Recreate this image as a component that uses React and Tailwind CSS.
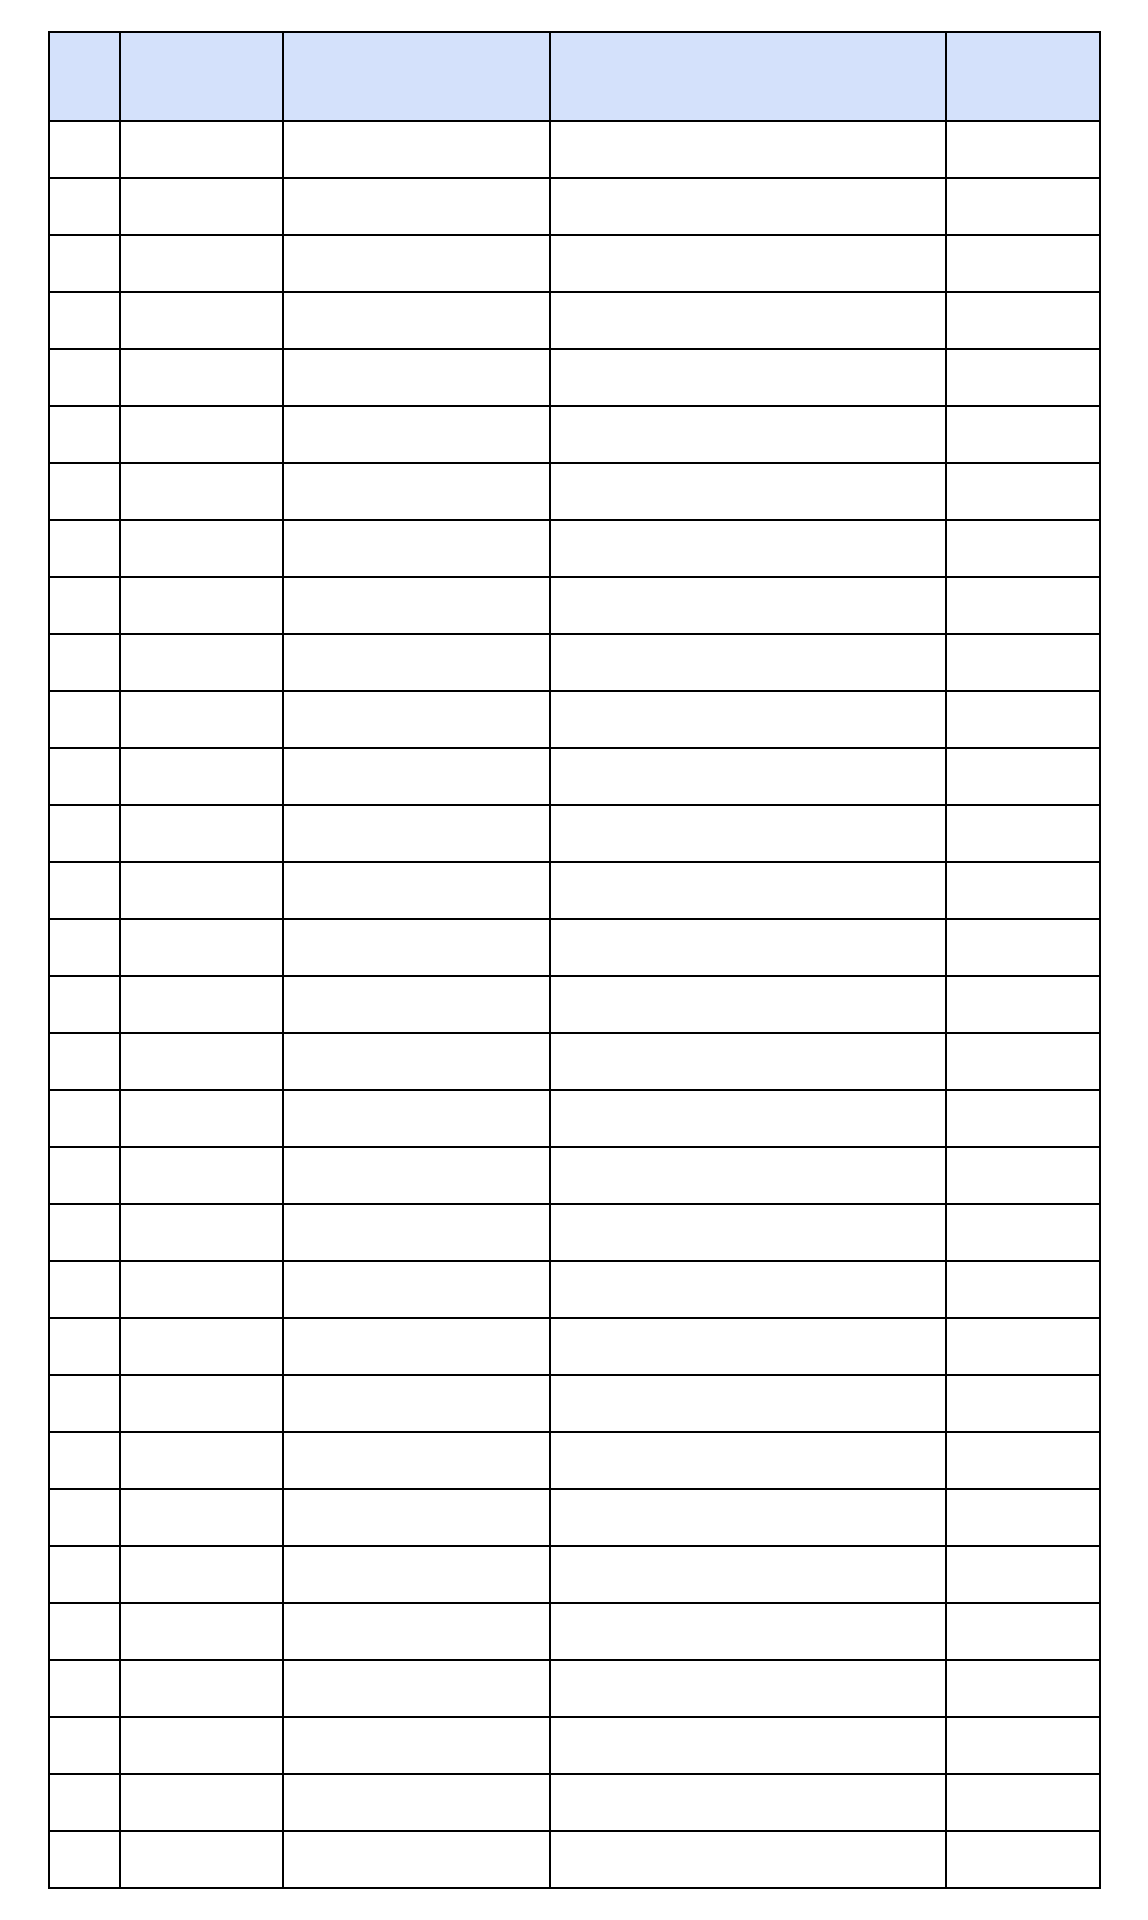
import React from "react";

const columns = [
  { key: "no", width: "w-[71px]" },
  { key: "date", width: "w-[163px]" },
  { key: "name", width: "w-[267px]" },
  { key: "description", width: "w-[396px]" },
  { key: "amount", width: "w-[154px]" },
];

const rows = Array.from({ length: 31 }, (_, i) => i);

export default function App() {
  return (
    <div className="min-h-[1920px] bg-white pl-[48px] pt-[31px] font-['Liberation_Sans',sans-serif]">
      <table className="table-fixed border-collapse w-[1053px]">
        <colgroup>
          {columns.map((col) => (
            <col key={col.key} className={col.width} />
          ))}
        </colgroup>
        <thead>
          <tr className="h-[89px] bg-[#d4e1fb]">
            {columns.map((col) => (
              <th key={col.key} className="border-2 border-black" />
            ))}
          </tr>
        </thead>
        <tbody>
          {rows.map((r) => (
            <tr key={r} className="h-[57px]">
              {columns.map((col) => (
                <td key={col.key} className="border-2 border-black" />
              ))}
            </tr>
          ))}
        </tbody>
      </table>
    </div>
  );
}
